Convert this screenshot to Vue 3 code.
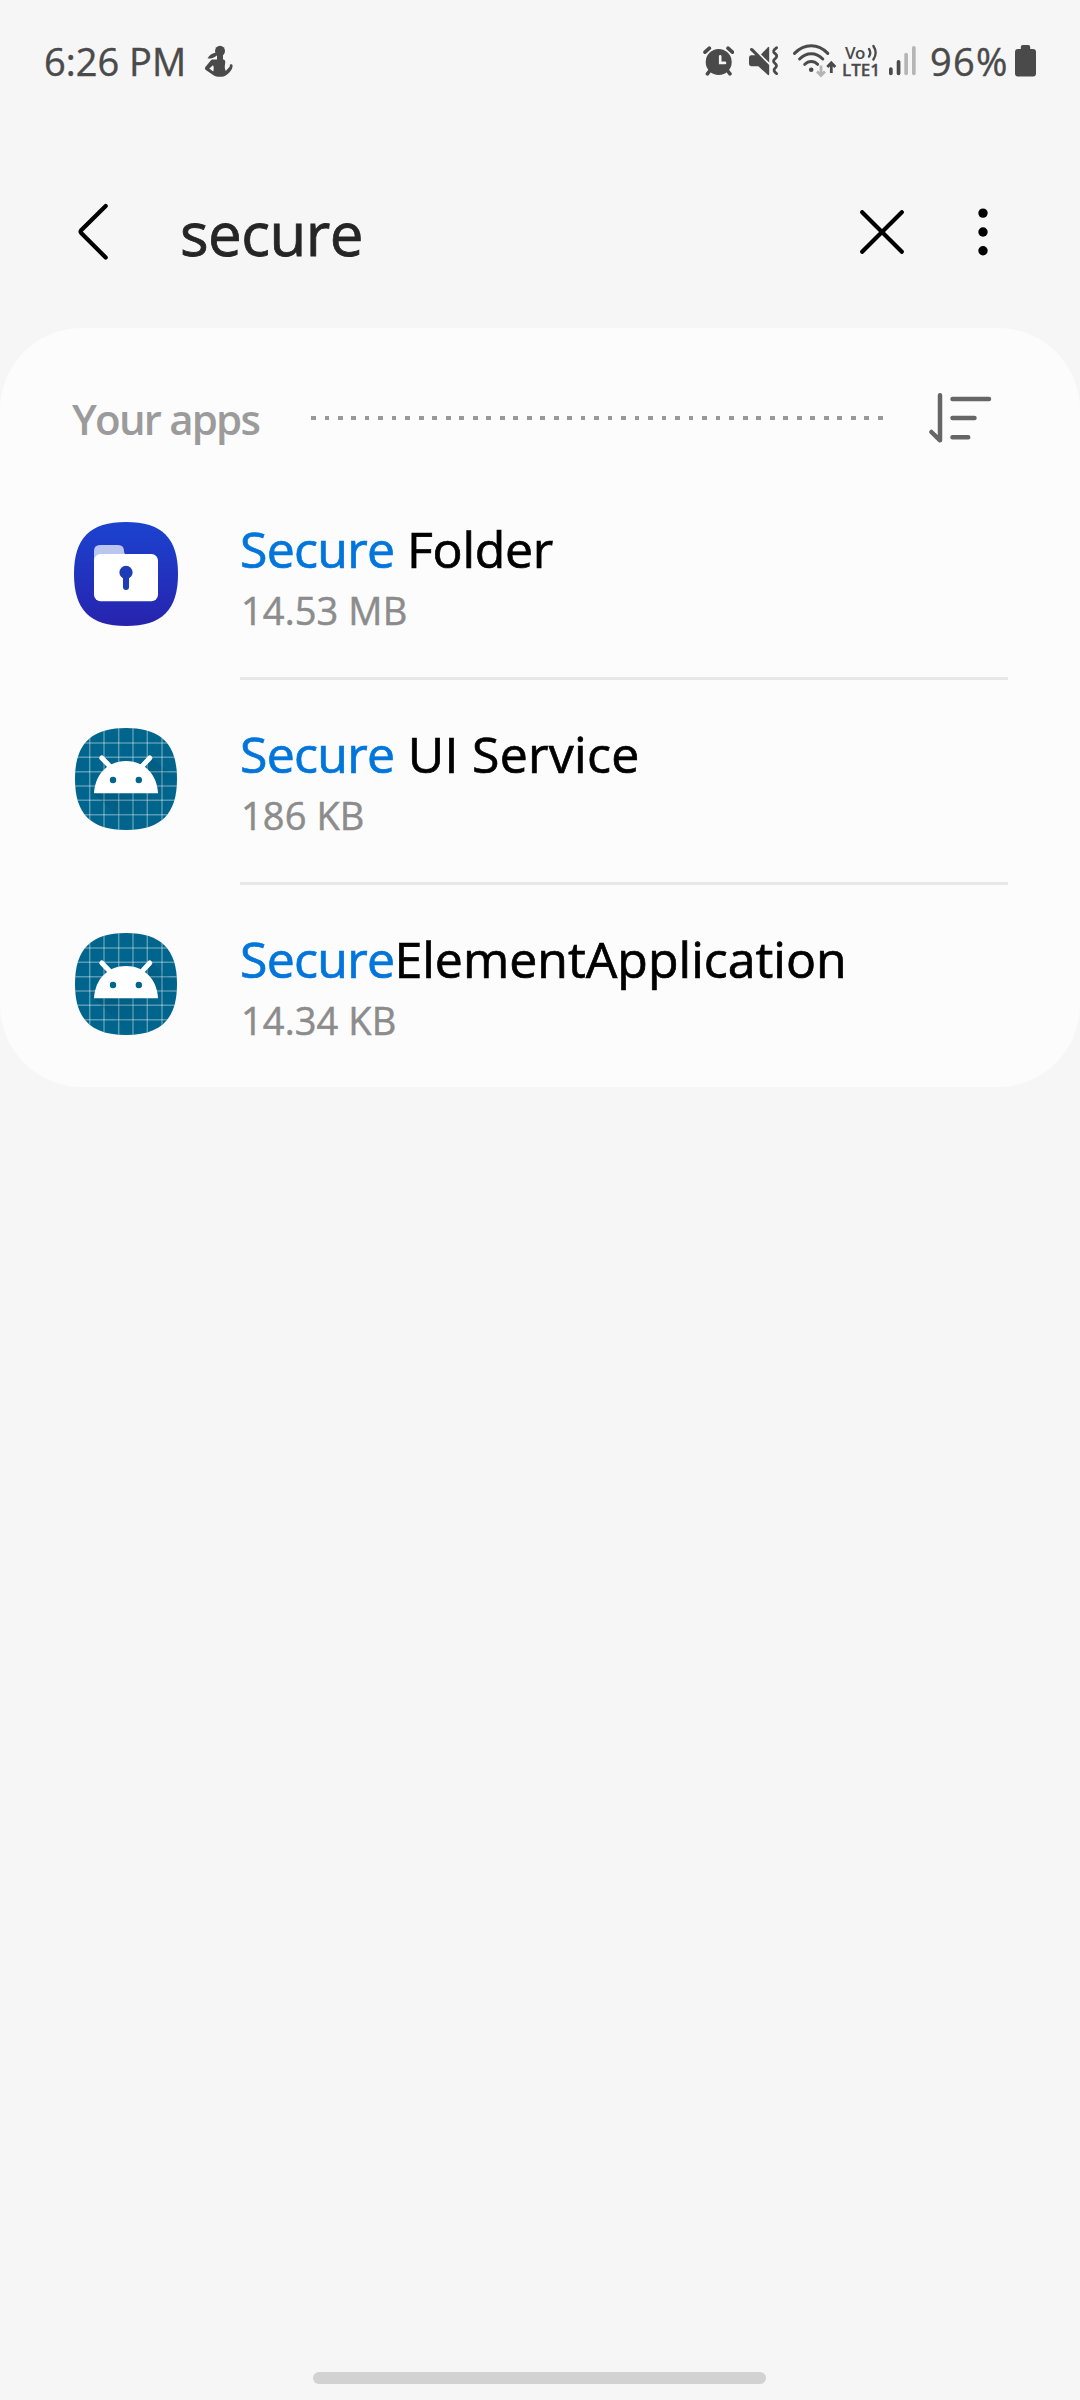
<script setup>
import { ref } from 'vue'

const query = ref('secure')

const apps = ref([
  { match: 'Secure', rest: ' Folder', size: '14.53 MB', icon: 'folder', spacing: -0.3 },
  { match: 'Secure', rest: ' UI Service', size: '186 KB', icon: 'android', spacing: 0.3 },
  { match: 'Secure', rest: 'ElementApplication', size: '14.34 KB', icon: 'android', spacing: 0 },
])

const gridX = [14.7, 29, 43.7, 58, 72.3, 87]
const gridY = [15, 29.3, 43.7, 58, 72.3, 86.7]
</script>

<template>
  <div class="screen">
    <header class="status">
      <span class="time">6:26 PM</span>
      <svg class="person" width="30" height="40" viewBox="0 -5 30 40">
        <ellipse cx="16" cy="6" rx="5" ry="5.3" />
        <path d="M13 8H19V16H13z" />
        <path d="M12.5 7.5C8 8 5 10 3.6 13.6C7 13.8 11 12.5 13.5 10z" />
        <path fill-rule="evenodd" d="M9 14.5H19C21.5 14.5 21.5 17 21 19.5C20.5 22 20.8 24 21.8 26L25.8 21.5V19.8C26.2 18.8 28.6 19 28.6 20.6C28.8 24.5 24.5 30 19.5 31.5C16 32.2 12 32 9.5 30.2L1.8 25C.8 24.2.7 23 1.4 22L6.5 15.8C7.2 15 8 14.5 9 14.5zM9 20.3L5.3 23.5L9.2 26.4C10 24 9.9 22 9 20.3z" />
      </svg>

      <div class="indicators">
        <svg width="31" height="40" viewBox="0 -6 31 40">
          <circle cx="15.7" cy="16" r="13" />
          <path class="line" stroke-width="3.6" d="M2 6.2L6.4 2.2M25 2.2L29.4 6.2M4.4 27.8L7 24.5M27 27.8L24.4 24.5" />
          <path class="hands" d="M17.2 10.3V16.9H22" />
        </svg>
        <svg class="mute" width="32" height="40" viewBox="0 -6 32 40">
          <path d="M13 8.4L20 1.2Q21.2.2 21.2 2V16.5z" />
          <path d="M2.2 4.2Q1.6 3 2.6 2.2T5 2.6L21.2 19V28Q21 30 19.4 28.6L10.3 20.2H3.2Q1 20 1 18V11.5Q1.2 9.4 3.2 9.3H7.3z" />
          <path class="line" stroke-width="2.8" d="M28.6 1.8Q23.5 5 27 7.5T27 12.8Q24 15 27 17.3T27 22.3Q24.5 24.5 28.6 27.6" />
        </svg>
        <svg class="wifi" width="46" height="40" viewBox="0 -3 46 40">
          <g class="line" stroke-width="3">
            <path d="M2.5 10.4C12.5 .3 26 .3 35.8 10.4" />
            <path d="M7.6 16C14.5 9 24 9 30.8 16" />
            <path d="M12.8 21.3C16.5 17.4 22 17.4 25.6 21.3" />
          </g>
          <circle cx="19.2" cy="26.7" r="2.3" />
          <path class="arrow faint" d="M29 22.5V32M25 28.5L29 32.5L33 28.5" />
          <path class="arrow" d="M39.3 30V20M35.3 24L39.3 19.8L43.3 24" />
        </svg>
        <div class="volte">
          <div class="vo">
            <span>Vo</span>
            <svg width="11" height="17" viewBox="0 0 11 17">
              <path class="line" stroke-width="2.3" d="M2 5Q4.6 8.8 2 12.6M6.4 2Q10.9 8.8 6.4 15.5" />
            </svg>
          </div>
          <div class="lte">LTE1</div>
        </div>
        <svg class="signal" width="27" height="40" viewBox="0 0 27 40">
          <rect x="0" y="27.3" width="3.7" height="7.9" rx="1.8" />
          <rect x="7.7" y="20" width="3.7" height="15.2" rx="1.8" />
          <rect class="off" x="15.3" y="12.7" width="3.7" height="22.5" rx="1.8" />
          <rect class="off" x="23" y="6" width="3.7" height="29.2" rx="1.8" />
        </svg>
        <span class="percent">96%</span>
        <svg width="22" height="40" viewBox="0 0 22 40">
          <path d="M5.8 7Q5.8 5 7.8 5H13.2Q15.2 5 15.2 7V9H18Q21 9 21 12V33.3Q21 36.5 18 36.5H3Q0 36.5 0 33.3V12Q0 9 3 9H5.8z" />
        </svg>
      </div>
    </header>

    <div class="search">
      <svg class="back" width="30" height="60" viewBox="0 0 30 60">
        <path d="M27.7 4L3.2 28.2Q2 29.6 3.2 31L27.7 55.5" />
      </svg>
      <span class="query">{{ query }}</span>
      <svg width="44" height="44" viewBox="0 0 44 44">
        <path d="M2.2 2.2L41.8 41.8M41.8 2.2L2.2 41.8" />
      </svg>
      <svg class="more" width="12" height="48" viewBox="0 0 12 48">
        <circle cx="6" cy="5.1" r="4.7" />
        <circle cx="6" cy="24" r="4.7" />
        <circle cx="6" cy="42.8" r="4.7" />
      </svg>
    </div>

    <main class="card">
      <div class="heading">
        <span class="label">Your apps</span>
        <div class="dots"></div>
        <svg class="sort" width="64" height="50" viewBox="0 0 64 50">
          <path d="M12 2.3V47.3L3.4 39M24.5 6H61M24.5 25H46.5M24.5 44.3H40.2" />
        </svg>
      </div>

      <ul>
        <li v-for="app in apps" :key="app.rest">
          <svg v-if="app.icon === 'folder'" class="icon" width="104" height="104" viewBox="0 0 104 104">
            <defs>
              <linearGradient id="blue" x1="0" y1="0" x2="0" y2="1">
                <stop offset="0" stop-color="#1b43cf" />
                <stop offset="1" stop-color="#2723ae" />
              </linearGradient>
            </defs>
            <path fill="url(#blue)" d="M52 0C88 0 104 16 104 52S88 104 52 104S0 88 0 52S16 0 52 0z" />
            <path fill="#bbc6f0" d="M20 40V29Q20 23 26 23H44Q50 23 50 29Q50 32 53 33V40z" />
            <rect x="20" y="32" width="64" height="47.2" rx="6.5" fill="#fff" />
            <circle cx="52" cy="50.4" r="6.6" fill="#1e3cb6" />
            <path d="M52 52V65" stroke="#1e3cb6" stroke-width="6" stroke-linecap="round" />
          </svg>
          <svg v-else class="icon" width="104" height="104" viewBox="-1 -1 104 104">
            <defs>
              <clipPath id="squircle">
                <path d="M51 0C86 0 102 16 102 51S86 102 51 102S0 86 0 51S16 0 51 0z" />
              </clipPath>
              <linearGradient id="shade" x1="0" y1="0" x2="1" y2="1">
                <stop offset="0" stop-color="#003c55" stop-opacity=".4" />
                <stop offset=".7" stop-color="#003c55" stop-opacity="0" />
              </linearGradient>
            </defs>
            <g clip-path="url(#squircle)">
              <rect width="102" height="102" fill="#00658d" />
              <line v-for="x in gridX" :key="'x' + x" class="grid" :x1="x" y1="0" :x2="x" y2="102" />
              <line v-for="y in gridY" :key="'y' + y" class="grid" x1="0" :y1="y" x2="102" :y2="y" />
              <path fill="url(#shade)" d="M19 65.3L56 102H102V51L76.5 30L70 38L83 65.3z" />
            </g>
            <path fill="#fff" d="M19 65.3C20 46 33 33 51 33S82 46 83 65.3z" />
            <path d="M26.8 30L36 39.4M74.8 30L66 39.4" stroke="#fff" stroke-width="5" stroke-linecap="round" />
            <circle cx="38" cy="52" r="3.2" fill="#00658d" />
            <circle cx="63.8" cy="52" r="3.2" fill="#00658d" />
          </svg>
          <div class="info">
            <p class="name"><span class="match">{{ app.match }}</span><span class="rest" :style="{ letterSpacing: app.spacing + 'px' }">{{ app.rest }}</span></p>
            <p class="size">{{ app.size }}</p>
          </div>
        </li>
      </ul>
    </main>

    <div class="handle"></div>
  </div>
</template>

<style>
  body{
    margin: 0;
    background: #f6f6f6;
  }
</style>

<style scoped>
  .screen{
    display: flex;
    flex-direction: column;
    width: 1080px;
    height: 2400px;
    background: #f6f6f6;
    font-family: "Open Sans", "Noto Sans", sans-serif;
  }
  svg{
    display: block;
    flex: none;
  }
  .status{
    display: flex;
    align-items: center;
    box-sizing: border-box;
    height: 120px;
    padding: 0 43px 0 44px;
    color: #4a4a4a;
    fill: #4a4a4a;
    font-size: 38px;
    line-height: 40px;
  }
  .time{
    width: 160px;
    padding-top: 1px;
    white-space: nowrap;
    -webkit-text-stroke: 0.4px #4a4a4a;
  }
  .indicators{
    display: flex;
    align-items: center;
    margin-left: auto;
  }
  .line{
    fill: none;
    stroke: #4a4a4a;
    stroke-linecap: round;
    stroke-linejoin: round;
  }
  .hands{
    fill: none;
    stroke: #f6f6f6;
    stroke-width: 2.6;
    stroke-linecap: round;
  }
  .arrow{
    fill: none;
    stroke: #4a4a4a;
    stroke-width: 2.8;
  }
  .faint{
    stroke: #b4b4b4;
  }
  .mute{
    margin-left: 14px;
  }
  .wifi{
    margin-left: 12px;
  }
  .volte{
    width: 39px;
    margin-left: 4px;
    padding-top: 2px;
    font-size: 17px;
    font-weight: 600;
    line-height: 17px;
  }
  .vo{
    display: flex;
    padding-left: 3px;
    letter-spacing: -0.5px;
  }
  .vo svg{
    margin-left: 2px;
  }
  .lte{
    -webkit-text-stroke: 0.3px #4a4a4a;
  }
  .signal{
    margin-left: 8px;
  }
  .off{
    fill: #b6b6b6;
  }
  .percent{
    width: 85px;
    margin-left: 14px;
    padding-top: 1px;
    letter-spacing: 1.3px;
    -webkit-text-stroke: 0.4px #4a4a4a;
  }
  .search{
    display: flex;
    align-items: center;
    box-sizing: border-box;
    height: 208px;
    padding: 16px 91px 0 78px;
    fill: none;
    stroke: #000;
    stroke-width: 4.2;
    stroke-linecap: round;
  }
  .query{
    flex: 1;
    padding: 2px 0 0 72px;
    color: #252525;
    font-size: 60px;
    line-height: 80px;
    letter-spacing: -0.5px;
    -webkit-text-stroke: 0.8px #252525;
  }
  .more{
    margin-left: 73px;
    fill: #000;
    stroke: none;
  }
  .card{
    height: 759px;
    background: #fcfcfc;
    border-radius: 82px;
  }
  .heading{
    display: flex;
    align-items: center;
    box-sizing: border-box;
    height: 147px;
    padding: 33px 88px 0 72px;
  }
  .label{
    width: 239px;
    padding-top: 1px;
    color: #9b9b9b;
    font-size: 42px;
    font-weight: 600;
    line-height: 60px;
    letter-spacing: -1.8px;
    white-space: nowrap;
  }
  .dots{
    width: 572px;
    height: 4.5px;
    background: repeating-linear-gradient(90deg, #999 0 4.5px, transparent 4.5px 13.5px);
  }
  .sort{
    margin-left: auto;
    fill: none;
    stroke: #666;
    stroke-width: 4.5;
    stroke-linecap: round;
    stroke-linejoin: round;
  }
  ul{
    margin: 0;
    padding: 0;
    list-style-type: none;
  }
  li{
    display: flex;
    height: 205px;
    padding: 0 72px 0 74px;
  }
  .icon{
    margin-top: 47px;
  }
  .grid{
    stroke: #fff;
    stroke-opacity: 0.35;
    stroke-width: 1.5;
  }
  .info{
    flex: 1;
    box-sizing: border-box;
    margin-left: 62px;
    padding-top: 43px;
    border-bottom: 3px solid #e8e8e8;
  }
  li:last-child .info{
    border-bottom: none;
  }
  p{
    margin: 0;
  }
  .name{
    color: #000;
    font-size: 50px;
    line-height: 62px;
    white-space: pre;
    -webkit-text-stroke: 0.7px #000;
  }
  .match{
    color: #0075db;
    letter-spacing: -0.7px;
    -webkit-text-stroke: 0.7px #0075db;
  }
  .size{
    padding-left: 1px;
    color: #8c8c8c;
    font-size: 38px;
    line-height: 60px;
    letter-spacing: 0.1px;
    -webkit-text-stroke: 0.5px #8c8c8c;
  }
  .handle{
    width: 453px;
    height: 12px;
    margin: auto auto 16px 313px;
    background: #d2d2d2;
    border-radius: 6px;
  }
</style>
